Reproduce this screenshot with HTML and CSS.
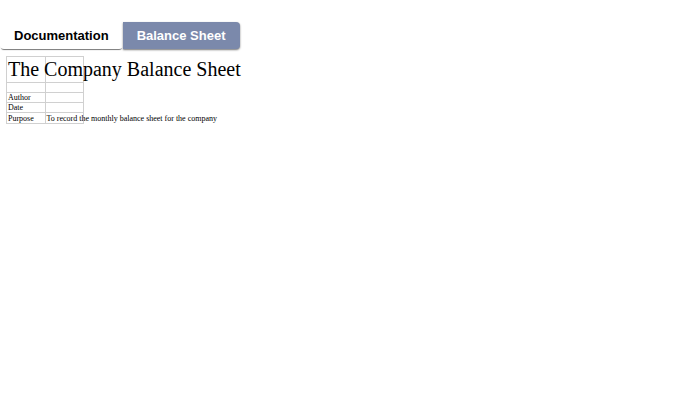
FILE: index.html
```html
<!DOCTYPE html>
<html lang="en">
<head>
<meta charset="utf-8">
<title>The Company Balance Sheet</title>
<link rel="stylesheet" href="styles.css">
</head>
<body>
<nav class="tabs">
<a class="tab tab-current" href="#documentation">Documentation</a>
<a class="tab" href="#balance-sheet">Balance Sheet</a>
</nav>
<main id="documentation">
<table class="sheet">
<colgroup><col class="col-label"><col class="col-value"></colgroup>
<tbody>
<tr class="row-title"><td class="title">The Company Balance Sheet</td><td></td></tr>
<tr><td></td><td></td></tr>
<tr><td>Author</td><td></td></tr>
<tr><td>Date</td><td></td></tr>
<tr class="row-purpose"><td>Purpose</td><td>To record the monthly balance sheet for the company</td></tr>
</tbody>
</table>
</main>
</body>
</html>
```
FILE: styles.css
```css
body {
  margin: 0;
  padding-top: 22px;
  background: #fff;
  color: #000;
  font-family: "Liberation Serif", "Times New Roman", serif;
}

.tabs {
  display: flex;
  font: bold 13px/27px "Liberation Sans", Arial, sans-serif;
}

.tab {
  padding: 0 14px;
  border-radius: 0 4px 4px 0;
  background: #7b89ab;
  color: #fff;
  text-decoration: none;
  box-shadow: 0 1px 2px #777;
}

.tab-current {
  border-radius: 0 0 4px 4px;
  background: #fff;
  color: #000;
  box-shadow: 0 2px 1px -1px #777;
}

.sheet {
  margin: 7px 6px;
  width: 78px;
  table-layout: fixed;
  border-collapse: collapse;
  font-size: 8px;
  line-height: 9px;
}

.col-label,
.col-value {
  width: 50%;
}

.sheet td {
  height: 9px;
  padding: 0 1px;
  border: 1px solid #d0d0d0;
  white-space: nowrap;
}

.sheet .row-purpose td {
  height: 10px;
}

.sheet .row-title td {
  height: 25px;
}

.sheet .title {
  font-size: 20px;
  line-height: 25px;
}
```
